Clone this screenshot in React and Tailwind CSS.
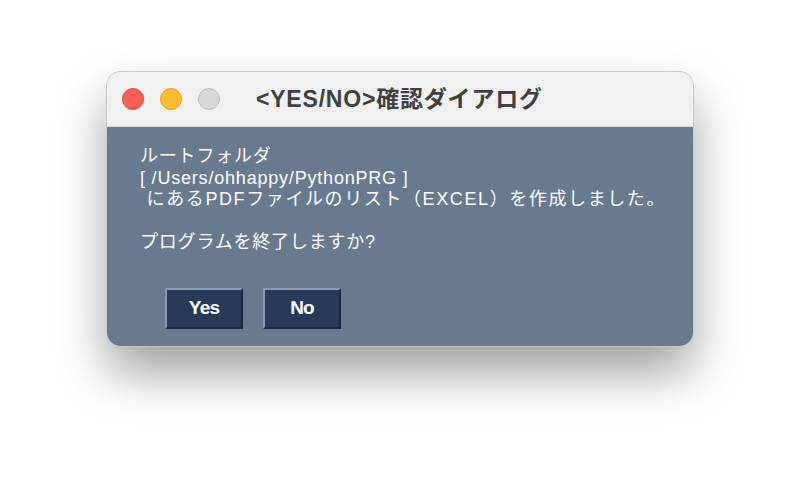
export default function App() {
  return (
    <div className="w-[800px] h-[488px] bg-white pt-[72px] pl-[107px]" style={{ fontFamily: '"Liberation Sans", "Noto Sans CJK JP", sans-serif' }}>
      <div className="w-[586px] h-[274px] rounded-[14px] overflow-hidden flex flex-col shadow-[0_26px_50px_rgba(0,0,0,0.38)] ring-1 ring-[#c8c8c8]">
        <div className="h-[55px] bg-[#f0f0f0] border-b border-[#d6d6d6] flex items-center pl-[15px]">
          <div className="flex gap-[16px]">
            <span className="w-[22px] h-[22px] rounded-full bg-[#fe5f57] border border-[#e0443e]" />
            <span className="w-[22px] h-[22px] rounded-full bg-[#febc2e] border border-[#dea123]" />
            <span className="w-[22px] h-[22px] rounded-full bg-[#d8d8d8] border border-[#bdbdbd]" />
          </div>
          <div className="ml-[36px] text-[23px] font-bold text-[#404040] tracking-[0.8px]">&lt;YES/NO&gt;確認ダイアログ</div>
        </div>
        <div className="flex-1 bg-[#687a90] pl-[33px] pt-[19px] text-white">
          <div className="text-[18px] leading-[21.5px] tracking-[0.8px]">
            <div>ルートフォルダ</div>
            <div>[ /Users/ohhappy/PythonPRG ]</div>
            <div className="tracking-[1.6px]">&nbsp;にあるPDFファイルのリスト（EXCEL）を作成しました。</div>
            <div>&nbsp;</div>
            <div>プログラムを終了しますか?</div>
          </div>
          <div className="flex gap-[20px] ml-[25px] mt-[34px]">
            <button className="w-[78px] h-[41px] bg-[#283a5a] border-2 border-t-[#8a9ab0] border-l-[#8a9ab0] border-r-[#1a2740] border-b-[#1a2740] text-[19px] font-bold text-white tracking-[-0.8px]">Yes</button>
            <button className="w-[78px] h-[41px] bg-[#283a5a] border-2 border-t-[#8a9ab0] border-l-[#8a9ab0] border-r-[#1a2740] border-b-[#1a2740] text-[19px] font-bold text-white tracking-[-0.8px]">No</button>
          </div>
        </div>
      </div>
    </div>
  );
}
